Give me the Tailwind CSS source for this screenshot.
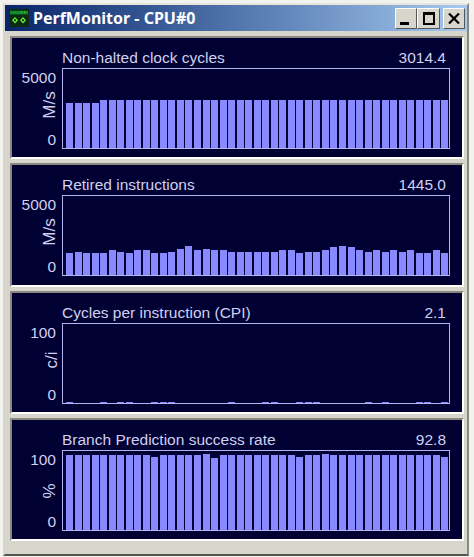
<!DOCTYPE html>
<html lang="en">
<head>
    <meta charset="UTF-8">
    <title>PerfMonitor - CPU#0</title>
    <script src="https://cdn.jsdelivr.net/npm/@tailwindcss/browser@4"></script>
</head>
<body class="bg-[#f2f2ee] w-[474px] h-[557px] overflow-hidden">
<div class="ml-[3px] mt-[3px] w-[466px] h-[553px] flex flex-col bg-[#d8d6cc] border-r-2 border-b-2 border-r-[#8a8880] border-b-[#55544e] border-l-2 border-l-[#d8d6cc] border-t-2 border-t-[#e8e6dc]">

    <div class="h-[26px] flex items-center bg-gradient-to-r from-[#0a246a] to-[#a6caf0] pl-[4px] pr-[2px]">
        <svg class="w-[20px] h-[18px]" viewBox="0 0 20 20" preserveAspectRatio="none">
            <rect width="20" height="20" fill="#0c2a14"/>
            <rect x="1" y="2" width="18" height="4" fill="#128a2c"/>
            <rect x="12" y="3" width="1" height="1" fill="#7cf06a"/>
            <rect x="15" y="3" width="1" height="1" fill="#7cf06a"/>
            <path d="M6 9 L9 12.5 L6 16 L3 12.5 Z M14 9 L17 12.5 L14 16 L11 12.5 Z" fill="#5cf02c"/>
            <rect x="5" y="11.5" width="2" height="2" fill="#0c2a14"/>
            <rect x="13" y="11.5" width="2" height="2" fill="#0c2a14"/>
        </svg>
        <span class="ml-[4px] text-white font-bold text-[16px] font-['Noto_Sans',sans-serif]">PerfMonitor - CPU#0</span>
        <div class="ml-auto flex items-center">
            <div class="w-[22px] h-[21px] bg-[#d8d6cc] border border-t-white border-l-white border-r-[#555] border-b-[#555] flex items-end justify-start pl-[4px] pb-[3px]">
                <div class="w-[9px] h-[3px] bg-black"></div>
            </div>
            <div class="w-[23px] h-[21px] bg-[#d8d6cc] border border-t-white border-l-white border-r-[#555] border-b-[#555] flex items-center justify-center">
                <div class="w-[12px] h-[13px] border-2 border-t-[3px] border-black"></div>
            </div>
            <div class="ml-[3px] w-[22px] h-[21px] bg-[#d8d6cc] border border-t-white border-l-white border-r-[#555] border-b-[#555] flex items-center justify-center">
                <svg class="w-[12px] h-[11px]" viewBox="0 0 12 11"><path d="M1 0.5 L11 10.5 M11 0.5 L1 10.5" stroke="#000" stroke-width="2.2"/></svg>
            </div>
        </div>
    </div>

    <div id="panels" class="flex-1 flex flex-col gap-[4px] pl-[5px] pr-[3px] pt-[5px]"></div>
</div>

<script type="text/javascript">
    const flat = (n, v) => Array(n).fill(v);

    const charts = [
        {
            title: 'Non-halted clock cycles', value: '3014.4', top: '5000', unit: 'M/s',
            panelClass: 'h-[123px]', unitClass: 'mb-[8px] -mr-[7px]',
            bars: [45, 45, 45, 45].concat(flat(41, 48))
        },
        {
            title: 'Retired instructions', value: '1445.0', top: '5000', unit: 'M/s',
            panelClass: 'h-[124px]', unitClass: 'mb-[8px] -mr-[7px]',
            bars: [22, 23, 22, 22, 22, 25, 23, 22, 25, 25, 22, 22, 23, 26, 29, 25, 26, 25, 25, 23,
                   23, 23, 23, 23, 23, 25, 25, 22, 23, 23, 25, 28, 29, 28, 25, 23, 25, 23, 25, 23, 25, 22, 22, 25, 22]
        },
        {
            title: 'Cycles per instruction (CPI)', value: '2.1', top: '100', unit: 'c/i',
            panelClass: 'h-[123px]', unitClass: 'mb-[8px] -mr-[4px]',
            bars: [1, 0, 0, 0, 1, 0, 1, 1, 0, 0, 1, 1, 1, 0, 0, 0, 0, 0, 0, 1,
                   0, 0, 0, 1, 1, 0, 0, 1, 1, 1, 0, 0, 0, 0, 0, 1, 0, 1, 0, 0, 0, 1, 1, 0, 1]
        },
        {
            title: 'Branch Prediction success rate', value: '92.8', top: '100', unit: '%',
            panelClass: 'h-[123px]', unitClass: 'mb-0 -mr-[1px]',
            bars: [75, 75, 75, 75, 75, 75, 75, 75, 75, 75, 73, 75, 75, 75, 75, 75, 76, 72, 75, 75,
                   75, 75, 75, 75, 75, 75, 75, 73, 75, 75, 76, 75, 75, 75, 75, 75, 75, 75, 75, 75, 75, 75, 75, 75, 73]
        }
    ];

    function renderChart(chart) {
        const bars = chart.bars.map(h => `<div class="w-[7px] bg-[#8888ff]" style="height:${h}px"></div>`).join('');
        return `
        <div class="${chart.panelClass} border-2 border-t-[#8a8880] border-l-[#8a8880] border-r-white border-b-white bg-[#000033]">
            <div class="flex justify-between pl-[50px] pr-[16px] pt-[11px] h-[30px] text-[15.5px] leading-[18px] text-[#d0d0f0] font-['Liberation_Sans',sans-serif]">
                <span>${chart.title}</span><span>${chart.value}</span>
            </div>
            <div class="flex">
                <div class="w-[50px] h-[81px] pt-[1px] flex flex-col items-end justify-between pr-[6px] text-[15.5px] leading-[18px] text-[#d0d0f0] font-['Liberation_Sans',sans-serif]">
                    <span>${chart.top}</span>
                    <span class="-rotate-90 text-[17px] ${chart.unitClass}">${chart.unit}</span>
                    <span>0</span>
                </div>
                <div class="w-[388px] h-[81px] border border-[#b4b4f0] flex items-end justify-between pl-[3px]">${bars}</div>
            </div>
        </div>`;
    }

    document.querySelector('#panels').innerHTML = charts.map(renderChart).join('');
</script>
</body>
</html>
